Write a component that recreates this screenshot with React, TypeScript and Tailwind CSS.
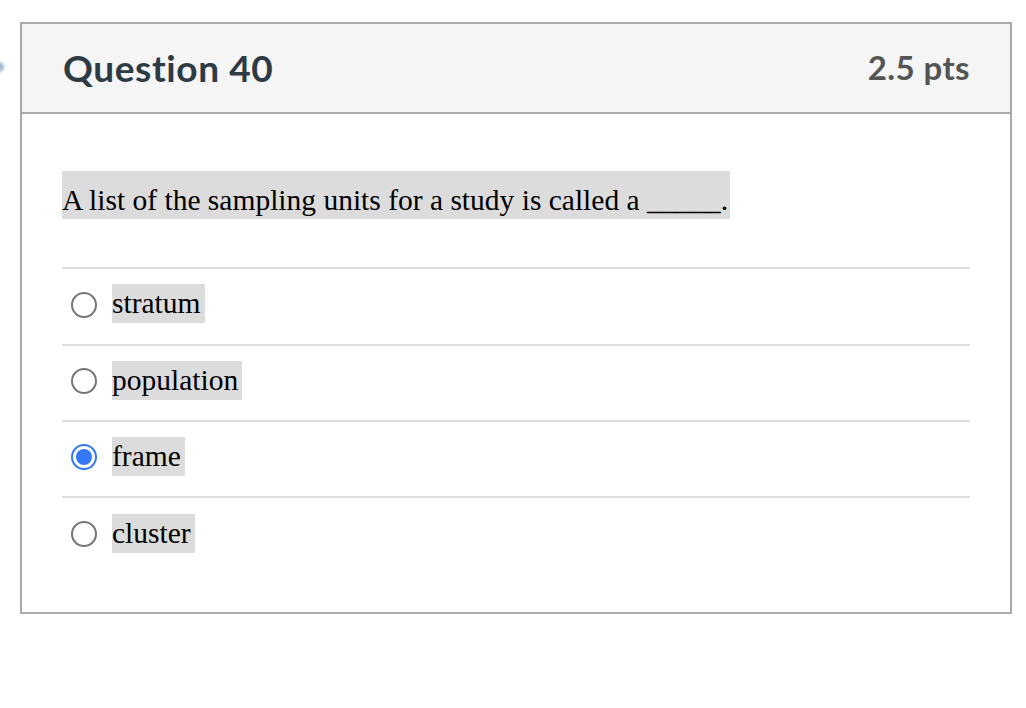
import React from 'react';

const options = [
  { id: 'stratum', label: 'stratum' },
  { id: 'population', label: 'population' },
  { id: 'frame', label: 'frame' },
  { id: 'cluster', label: 'cluster' },
];

const Radio: React.FC<{ checked: boolean }> = ({ checked }) =>
  checked ? (
    <span className="w-[26px] h-[26px] rounded-full border-[2px] border-[#3478f6] flex items-center justify-center shrink-0">
      <span className="w-[16px] h-[16px] rounded-full bg-[#3478f6]" />
    </span>
  ) : (
    <span className="w-[26px] h-[26px] rounded-full border-[2px] border-[#767676] bg-white shrink-0" />
  );

export default function App() {
  const [selected, setSelected] = React.useState('frame');

  return (
    <div className="w-[1026px] h-[708px] bg-white relative overflow-hidden pt-[22px] pl-[20px]">
      {/* stray scroll marker at the left edge */}
      <div className="absolute left-[-6px] top-[62px] w-[10px] h-[10px] rounded-full bg-[#9fb6cf] blur-[1.5px]" />

      <div className="w-[992px] border-[2px] border-[#aaaaaa]">
        <div className="h-[90px] bg-[#f5f5f5] border-b-[2px] border-[#aaaaaa] flex items-center justify-between pl-[41px] pr-[40px] font-['Lato',sans-serif] font-bold">
          <h2 className="text-[37px] text-[#2d3b45] tracking-[0.6px]">Question 40</h2>
          <span className="text-[33px] text-[#555555] tracking-[0.4px]">2.5 pts</span>
        </div>

        <div className="pl-[40px] pr-[40px] pt-[57px] pb-[38px] font-['Liberation_Serif',serif] text-black">
          <div className="pb-[48px] border-b-[2px] border-[#dddddd]">
            <span className="inline-block bg-[#dcdcdc] text-[29.5px] leading-[38px] pt-[10px] pr-[2px]">
              A list of the sampling units for a study is called a _____.
            </span>
          </div>

          {options.map((opt, i) => (
            <label
              key={opt.id}
              onClick={() => setSelected(opt.id)}
              className={`flex items-center gap-[15px] pl-[9px] pb-[4px] cursor-pointer ${i === 0 ? 'h-[77px]' : 'h-[76px]'} ${i < options.length - 1 ? 'border-b-[2px] border-[#dddddd]' : ''}`}
            >
              <Radio checked={selected === opt.id} />
              <span className="bg-[#dcdcdc] text-[29.5px] leading-[39px] pr-[4px] mb-[2px]">{opt.label}</span>
            </label>
          ))}
        </div>
      </div>
    </div>
  );
}
